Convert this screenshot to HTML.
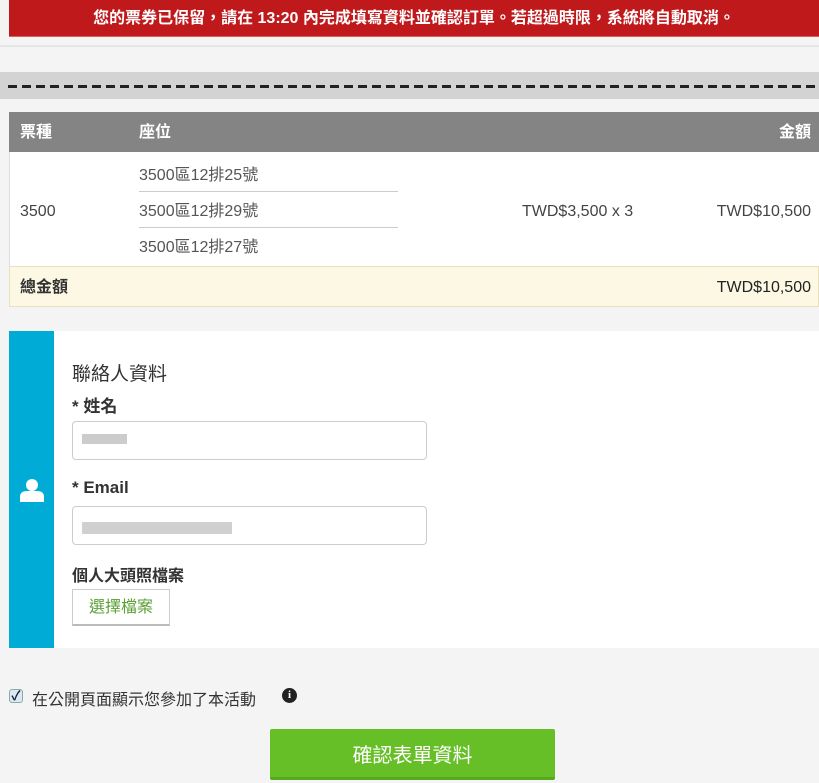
<!DOCTYPE html>
<html><head><meta charset="utf-8"><style>
*{box-sizing:border-box;margin:0;padding:0}
body{width:819px;height:782px;overflow:hidden;background:#f4f4f4;font-family:"Liberation Sans","Noto Sans CJK TC",sans-serif;color:#333;position:relative}
.abs{position:absolute}
.banner{left:9px;top:0;width:810px;height:37px;background:#c0191c;color:#fff;font-size:16px;font-weight:bold;text-align:center;line-height:37px;border-bottom:1px solid #e06060}
.band{left:0;top:72px;width:819px;height:27px;background:#d3d3d3}
.dash{left:8px;top:85px;width:811px;height:3px;background:repeating-linear-gradient(90deg,#222 0 9px,transparent 9px 14px)}
.thead{left:9px;top:112px;width:810px;height:40px;background:#848484;color:#fff;font-weight:bold;font-size:16px;line-height:42px}
.body{left:9px;top:152px;width:810px;height:114px;background:#fff;border-left:1px solid #ddd;font-size:16px;color:#444}
.total{left:9px;top:266px;width:810px;height:41px;background:#fcf8e3;border:1px solid #e8e0c0;font-weight:bold;font-size:16px;line-height:42px}
.seat{position:absolute;left:129px;width:259px;height:36px;line-height:40px;color:#555}
.panel{left:9px;top:331px;width:810px;height:317px;background:#fff}
.strip{left:9px;top:331px;width:45px;height:317px;background:#00acd6}
.inp{position:absolute;left:72px;width:355px;height:39px;border:1px solid #ccc;border-radius:4px;background:#fff}
.lbl{position:absolute;left:72px;font-weight:bold;font-size:16px;color:#333}
.btn{left:270px;top:729px;width:285px;height:51px;background:#66bf26;border-bottom:3px solid #56a81e;border-radius:2px;color:#fff;font-size:20px;text-align:center;line-height:54px}
</style></head><body>
<div class="abs banner">您的票券已保留，請在 13:20 內完成填寫資料並確認訂單。若超過時限，系統將自動取消。</div>
<div class="abs" style="left:0;top:45px;width:819px;height:2px;background:#e6e6e6"></div>
<div class="abs band"></div><div class="abs dash"></div>
<div class="abs thead"><span class="abs" style="left:11px">票種</span><span class="abs" style="left:130px">座位</span><span class="abs" style="right:8px">金額</span></div>
<div class="abs body">
<span class="abs" style="left:10px;top:51px">3500</span>
<div class="seat" style="top:4px;border-bottom:1px solid #ccc">3500區12排25號</div>
<div class="seat" style="top:40px;border-bottom:1px solid #ccc">3500區12排29號</div>
<div class="seat" style="top:76px">3500區12排27號</div>
<span class="abs" style="left:512px;top:51px">TWD$3,500 x 3</span>
<span class="abs" style="right:8px;top:51px">TWD$10,500</span>
</div>
<div class="abs total"><span class="abs" style="left:10px">總金額</span><span class="abs" style="right:7px;font-weight:normal;color:#222">TWD$10,500</span></div>
<div class="abs panel"></div><div class="abs strip"></div>
<svg class="abs" style="left:19px;top:477px" width="26" height="26" viewBox="0 0 26 26"><circle cx="13" cy="8" r="6" fill="#fff"/><path d="M1 25 V20 Q1 14 8 14 H18 Q25 14 25 20 V25 Z" fill="#fff"/></svg>
<div class="abs" style="left:72px;top:359px;font-size:19px;color:#333">聯絡人資料</div>
<div class="lbl" style="top:392px;font-size:17px">* 姓名</div>
<div class="inp" style="top:421px"><div class="abs" style="left:9px;top:12px;width:45px;height:10px;background:#aaa;opacity:.6"></div></div>
<div class="lbl" style="top:478px;font-size:17px">* Email</div>
<div class="inp" style="top:506px"><div class="abs" style="left:9px;top:15px;width:150px;height:12px;background:#aaa;opacity:.55"></div></div>
<div class="lbl" style="top:562px">個人大頭照檔案</div>
<div class="abs" style="left:72px;top:589px;width:98px;height:37px;border:1px solid #ccc;border-bottom:2px solid #bbb;color:#5aa035;font-size:16px;text-align:center;line-height:35px;background:#fff">選擇檔案</div>
<div class="abs" style="left:9px;top:689px;width:14px;height:14px;border:1px solid #8aa;border-radius:3px;background:#dde8f4;color:#123;font-size:13px;line-height:12px;text-align:center;font-weight:bold">✓</div>
<div class="abs" style="left:32px;top:686px;font-size:16px;color:#333">在公開頁面顯示您參加了本活動</div>
<div class="abs" style="left:282px;top:688px;width:15px;height:15px;border-radius:50%;background:#222;color:#fff;font-size:11px;font-weight:bold;text-align:center;line-height:15px;font-family:'Liberation Serif',serif">i</div>
<div class="abs btn">確認表單資料</div>
</body></html>
